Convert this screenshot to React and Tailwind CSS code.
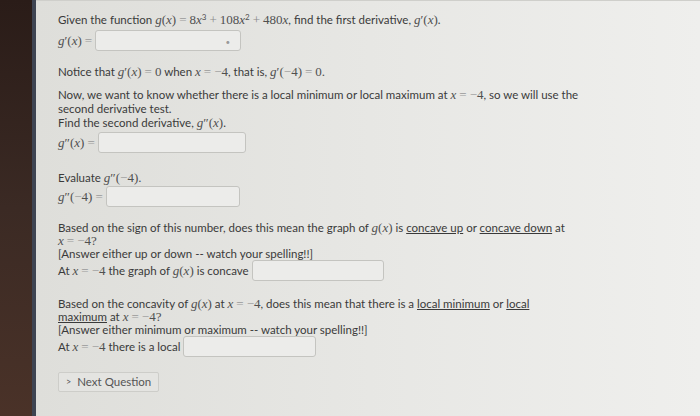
import React from "react";

const sans = { fontFamily: "Lato, 'Open Sans', sans-serif" };

// math pieces in a MathJax-like serif
const V = ({ children }) => (
  <span className="italic font-['Liberation_Serif',serif] text-[13px] text-[#505050]">{children}</span>
);
const N = ({ children }) => (
  <span className="font-['Liberation_Serif',serif] text-[13px] text-[#505050]">{children}</span>
);
const Eq = () => <span className="font-['Liberation_Serif',serif] text-[13px] text-[#9a9a9a] mx-[3px]">=</span>;
const Op = ({ children }) => (
  <span className="font-['Liberation_Serif',serif] text-[13px] text-[#8a8a8a] mx-[3px]">{children}</span>
);
const Minus = () => <span className="font-['Liberation_Serif',serif] text-[13px] text-[#9a9a9a]">−</span>;

const gp = (
  <>
    <V>g</V>
    <N>′(</N>
    <V>x</V>
    <N>)</N>
  </>
);
const gpp = (
  <>
    <V>g</V>
    <N>″(</N>
    <V>x</V>
    <N>)</N>
  </>
);
const xEqNeg4 = (
  <>
    <V>x</V>
    <Eq />
    <Minus />
    <N>4</N>
  </>
);

const Box = ({ w, mark }) => (
  <span
    className={`relative inline-block h-[21px] align-middle rounded-[3px] border border-[#c4c4c0] bg-[#ececea] ${w}`}
  >
    {mark && <span className="absolute right-[10px] top-[5px] text-[8px] text-[#999]">•</span>}
  </span>
);

const Line = ({ children, className = "" }) => (
  <div className={`leading-[14px] ${className}`}>{children}</div>
);
const Tight = ({ children, className = "" }) => (
  <div className={`leading-[13px] ${className}`}>{children}</div>
);

export default function App() {
  return (
    <div className="w-[700px] h-[416px] flex overflow-hidden" style={sans}>
      <div className="w-[32px] h-full bg-gradient-to-b from-[#2a1c18] via-[#3b2a24] to-[#4a3228]" />
      <div className="w-[4px] h-full bg-[#3e4452]" />
      <div className="flex-1 h-full bg-gradient-to-r from-[#dededa] via-[#e7e7e4] to-[#efefed] pl-[22px] pt-[12px] text-[11.5px] text-[#3a3a3a] border-t border-[#cfcfcb]">
        <Line>
          Given the function <V>g</V>
          <N>(</N>
          <V>x</V>
          <N>)</N>
          <Eq />
          <N>8</N>
          <V>x</V>
          <sup className="text-[8px] text-[#505050]">3</sup>
          <Op>+</Op>
          <N>108</N>
          <V>x</V>
          <sup className="text-[8px] text-[#505050]">2</sup>
          <Op>+</Op>
          <N>480</N>
          <V>x</V>, find the first derivative, {gp}.
        </Line>
        <div className="flex items-center h-[21px] mt-[3px]">
          {gp}
          <Eq />
          <Box w="w-[146px]" mark />
        </div>

        <Line className="mt-[14px]">
          Notice that {gp}
          <Eq />
          <N>0</N> when {xEqNeg4}, that is, <V>g</V>
          <N>′(</N>
          <Minus />
          <N>4)</N>
          <Eq />
          <N>0.</N>
        </Line>

        <Line className="mt-[9px]">
          Now, we want to know whether there is a local minimum or local maximum at {xEqNeg4}, so we will use the
        </Line>
        <Line>second derivative test.</Line>
        <Line>Find the second derivative, {gpp}.</Line>
        <div className="flex items-center h-[21px] mt-[2px]">
          {gpp}
          <Eq />
          <Box w="w-[148px]" />
        </div>

        <Line className="mt-[18px]">
          Evaluate <V>g</V>
          <N>″(</N>
          <Minus />
          <N>4).</N>
        </Line>
        <div className="flex items-center h-[21px] mt-[1px]">
          <V>g</V>
          <N>″(</N>
          <Minus />
          <N>4)</N>
          <Eq />
          <Box w="w-[134px]" />
        </div>

        <Tight className="mt-[14px]">
          Based on the sign of this number, does this mean the graph of <V>g</V>
          <N>(</N>
          <V>x</V>
          <N>)</N> is <span className="underline">concave up</span> or{" "}
          <span className="underline">concave down</span> at
        </Tight>
        <Tight>
          {xEqNeg4}
          <N>?</N>
        </Tight>
        <Tight>[Answer either up or down -- watch your spelling!!]</Tight>
        <div className="flex items-center h-[21px]">
          <span>At&nbsp;</span>
          {xEqNeg4}
          <span>&nbsp;the graph of&nbsp;</span>
          <V>g</V>
          <N>(</N>
          <V>x</V>
          <N>)</N>
          <span>&nbsp;is concave&nbsp;</span>
          <Box w="w-[132px]" />
        </div>

        <Tight className="mt-[16px]">
          Based on the concavity of <V>g</V>
          <N>(</N>
          <V>x</V>
          <N>)</N> at {xEqNeg4}, does this mean that there is a <span className="underline">local minimum</span> or{" "}
          <span className="underline">local</span>
        </Tight>
        <Tight>
          <span className="underline">maximum</span> at {xEqNeg4}
          <N>?</N>
        </Tight>
        <Tight>[Answer either minimum or maximum -- watch your spelling!!]</Tight>
        <div className="flex items-center h-[21px]">
          <span>At&nbsp;</span>
          {xEqNeg4}
          <span>&nbsp;there is a local&nbsp;</span>
          <Box w="w-[133px]" />
        </div>

        <div className="mt-[15px] flex">
          <button className="h-[20px] px-[7px] flex items-center gap-[6px] rounded-[2px] border border-[#cdcdc9] bg-[#e4e4e1] text-[11.5px] text-[#555]">
            <span className="text-[9px]">&gt;</span>
            Next Question
          </button>
        </div>
      </div>
    </div>
  );
}
